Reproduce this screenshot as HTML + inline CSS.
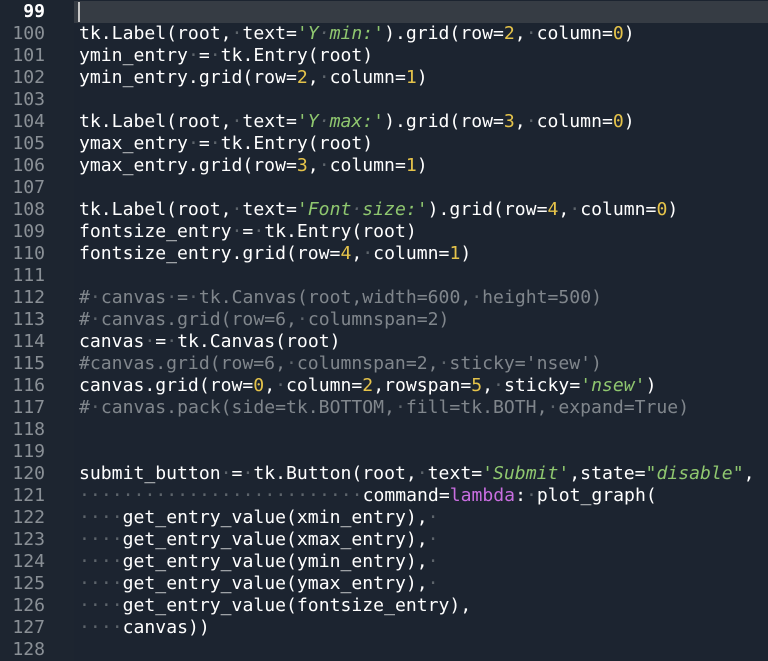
<!DOCTYPE html><html><head><style>
html,body{margin:0;padding:0;width:768px;height:661px;overflow:hidden;background:#1c2430;}
#g{position:absolute;left:0;top:0;width:74px;height:661px;background:#1d2530;}
#hl{position:absolute;left:74px;top:1px;width:694px;height:22px;background:#363c44;}
#cur{position:absolute;left:78px;top:2px;width:2px;height:20px;background:#c8c8c8;}
.ln{position:absolute;left:0;width:45px;text-align:right;color:#8a9096;font:18.1px/22px "DejaVu Sans Mono",monospace;}
.ln.c{color:#fff;font-weight:bold}
.cl{position:absolute;left:79px;white-space:pre;color:#fff;font:18.1px/22px "DejaVu Sans Mono",monospace;}
.s{color:#8fc76f;font-style:italic}.n{color:#e5c34a}.k{color:#c96ee0}.c{color:#80868c}.d{color:#5d646b}
</style></head><body>
<div id="g"></div><div id="hl"></div><div id="cur"></div>
<div id="nums"></div><div id="code">
<div class="cl" style="top:23px">tk.Label(root, text=<span class="s">'Y min:'</span>).grid(row=<span class="n">2</span>, column=<span class="n">0</span>)</div>
<div class="cl" style="top:45px">ymin_entry = tk.Entry(root)</div>
<div class="cl" style="top:67px">ymin_entry.grid(row=<span class="n">2</span>, column=<span class="n">1</span>)</div>
<div class="cl" style="top:111px">tk.Label(root, text=<span class="s">'Y max:'</span>).grid(row=<span class="n">3</span>, column=<span class="n">0</span>)</div>
<div class="cl" style="top:133px">ymax_entry = tk.Entry(root)</div>
<div class="cl" style="top:155px">ymax_entry.grid(row=<span class="n">3</span>, column=<span class="n">1</span>)</div>
<div class="cl" style="top:199px">tk.Label(root, text=<span class="s">'Font size:'</span>).grid(row=<span class="n">4</span>, column=<span class="n">0</span>)</div>
<div class="cl" style="top:221px">fontsize_entry = tk.Entry(root)</div>
<div class="cl" style="top:243px">fontsize_entry.grid(row=<span class="n">4</span>, column=<span class="n">1</span>)</div>
<div class="cl" style="top:287px"><span class="c"># canvas = tk.Canvas(root,width=600, height=500)</span></div>
<div class="cl" style="top:309px"><span class="c"># canvas.grid(row=6, columnspan=2)</span></div>
<div class="cl" style="top:331px">canvas = tk.Canvas(root)</div>
<div class="cl" style="top:353px"><span class="c">#canvas.grid(row=6, columnspan=2, sticky='nsew')</span></div>
<div class="cl" style="top:375px">canvas.grid(row=<span class="n">0</span>, column=<span class="n">2</span>,rowspan=<span class="n">5</span>, sticky=<span class="s">'nsew'</span>)</div>
<div class="cl" style="top:397px"><span class="c"># canvas.pack(side=tk.BOTTOM, fill=tk.BOTH, expand=True)</span></div>
<div class="cl" style="top:463px">submit_button = tk.Button(root, text=<span class="s">'Submit'</span>,state=<span class="s">"disable"</span>,</div>
<div class="cl" style="top:485px">                          command=<span class="k">lambda</span>: plot_graph(</div>
<div class="cl" style="top:507px">    get_entry_value(xmin_entry), </div>
<div class="cl" style="top:529px">    get_entry_value(xmax_entry), </div>
<div class="cl" style="top:551px">    get_entry_value(ymin_entry), </div>
<div class="cl" style="top:573px">    get_entry_value(ymax_entry), </div>
<div class="cl" style="top:595px">    get_entry_value(fontsize_entry),</div>
<div class="cl" style="top:617px">    canvas))</div>
</div>
<script>
var h='';for(var i=99;i<=128;i++){h+='<div class="ln'+(i==99?' c':'')+'" style="top:'+(1+(i-99)*22)+'px">'+i+'</div>';}
document.getElementById('nums').innerHTML=h;
function walk(n){for(var c=n.firstChild;c;){var nx=c.nextSibling;if(c.nodeType==3){if(c.nodeValue.indexOf(' ')>=0){var f=document.createDocumentFragment();var p=c.nodeValue.split(' ');for(var j=0;j<p.length;j++){if(j>0){var s=document.createElement('span');s.className='d';s.textContent='·';f.appendChild(s);}if(p[j])f.appendChild(document.createTextNode(p[j]));}n.replaceChild(f,c);}}else if(c.nodeType==1)walk(c);c=nx;}}
walk(document.getElementById('code'));
</script>
</body></html>
